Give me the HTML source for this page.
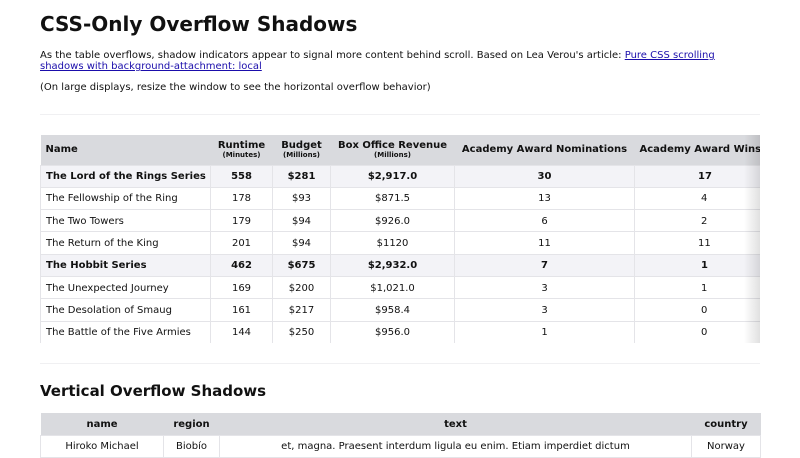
<!DOCTYPE html>
<html><head><meta charset="utf-8"><style>
*{margin:0;padding:0;box-sizing:border-box}
body{width:800px;height:450px;overflow:hidden;background:#fff;font-family:"DejaVu Sans","Liberation Sans",sans-serif;color:#111;position:relative}
h1{position:absolute;left:40px;top:10px;font-size:20px;font-weight:bold;line-height:28px}
.p1{position:absolute;left:40px;top:50px;font-size:10px;line-height:11px;width:720px}
.p1 a{color:#1a0dab}
.p2{position:absolute;left:40px;top:82px;font-size:10px;line-height:12px}
.hr{position:absolute;left:40px;width:720px;height:1px;background:#f0f0f2}
.wrap{position:absolute;left:40px;top:135px;width:720px;overflow:hidden;height:208px}
table{border-collapse:collapse;font-size:10px;table-layout:fixed}
th{background:#d9dade;font-weight:bold;height:30px;padding:0 5px;white-space:nowrap;overflow:hidden}
th small{display:block;font-size:7px;line-height:8px}
td{height:22.3px;padding:1px 5px 0;text-align:center;border:1px solid #e4e4e8;white-space:nowrap}
td:first-child{text-align:left}
tr.b td{font-weight:bold;background:#f3f3f7}
.sh{position:absolute;left:744px;top:135px;width:16px;height:208px;background:linear-gradient(to right,rgba(0,0,0,0),rgba(0,0,0,.12))}
h2{position:absolute;left:40px;top:380px;font-size:15px;font-weight:bold;line-height:22px}
.t2{position:absolute;left:40px;top:413px;width:720px}
.t2 th{height:22px;padding-top:1px}
.t2 td{height:22px;text-align:center}
</style></head><body>
<h1>CSS-Only Overflow Shadows</h1>
<div class="p1">As the table overflows, shadow indicators appear to signal more content behind scroll. Based on Lea Verou's article: <a href="#">Pure CSS scrolling shadows with background-attachment: local</a></div>
<div class="p2">(On large displays, resize the window to see the horizontal overflow behavior)</div>
<div class="hr" style="top:114px"></div>
<div class="wrap"><table style="width:760px">
<colgroup><col style="width:170px"><col style="width:62px"><col style="width:58px"><col style="width:124px"><col style="width:180px"><col style="width:166px"></colgroup>
<tr><th style="text-align:left">Name</th><th>Runtime<small>(Minutes)</small></th><th>Budget<small>(Millions)</small></th><th>Box Office Revenue<small>(Millions)</small></th><th>Academy Award Nominations</th><th style="text-align:left">Academy Award Wins</th></tr>
<tr class="b"><td>The Lord of the Rings Series</td><td>558</td><td>$281</td><td>$2,917.0</td><td>30</td><td style="text-align:left;padding-left:63px">17</td></tr>
<tr><td>The Fellowship of the Ring</td><td>178</td><td>$93</td><td>$871.5</td><td>13</td><td style="text-align:left;padding-left:66px">4</td></tr>
<tr><td>The Two Towers</td><td>179</td><td>$94</td><td>$926.0</td><td>6</td><td style="text-align:left;padding-left:66px">2</td></tr>
<tr><td>The Return of the King</td><td>201</td><td>$94</td><td>$1120</td><td>11</td><td style="text-align:left;padding-left:63px">11</td></tr>
<tr class="b"><td>The Hobbit Series</td><td>462</td><td>$675</td><td>$2,932.0</td><td>7</td><td style="text-align:left;padding-left:66px">1</td></tr>
<tr><td>The Unexpected Journey</td><td>169</td><td>$200</td><td>$1,021.0</td><td>3</td><td style="text-align:left;padding-left:66px">1</td></tr>
<tr><td>The Desolation of Smaug</td><td>161</td><td>$217</td><td>$958.4</td><td>3</td><td style="text-align:left;padding-left:66px">0</td></tr>
<tr><td>The Battle of the Five Armies</td><td>144</td><td>$250</td><td>$956.0</td><td>1</td><td style="text-align:left;padding-left:66px">0</td></tr>
</table></div>
<div class="sh"></div>
<div class="hr" style="top:363px"></div>
<h2>Vertical Overflow Shadows</h2>
<div class="t2"><table style="width:720px">
<colgroup><col style="width:123px"><col style="width:56px"><col style="width:472px"><col style="width:69px"></colgroup>
<tr><th>name</th><th>region</th><th>text</th><th>country</th></tr>
<tr><td style="text-align:center">Hiroko Michael</td><td>Biobío</td><td>et, magna. Praesent interdum ligula eu enim. Etiam imperdiet dictum</td><td>Norway</td></tr>
</table></div>
</body></html>
